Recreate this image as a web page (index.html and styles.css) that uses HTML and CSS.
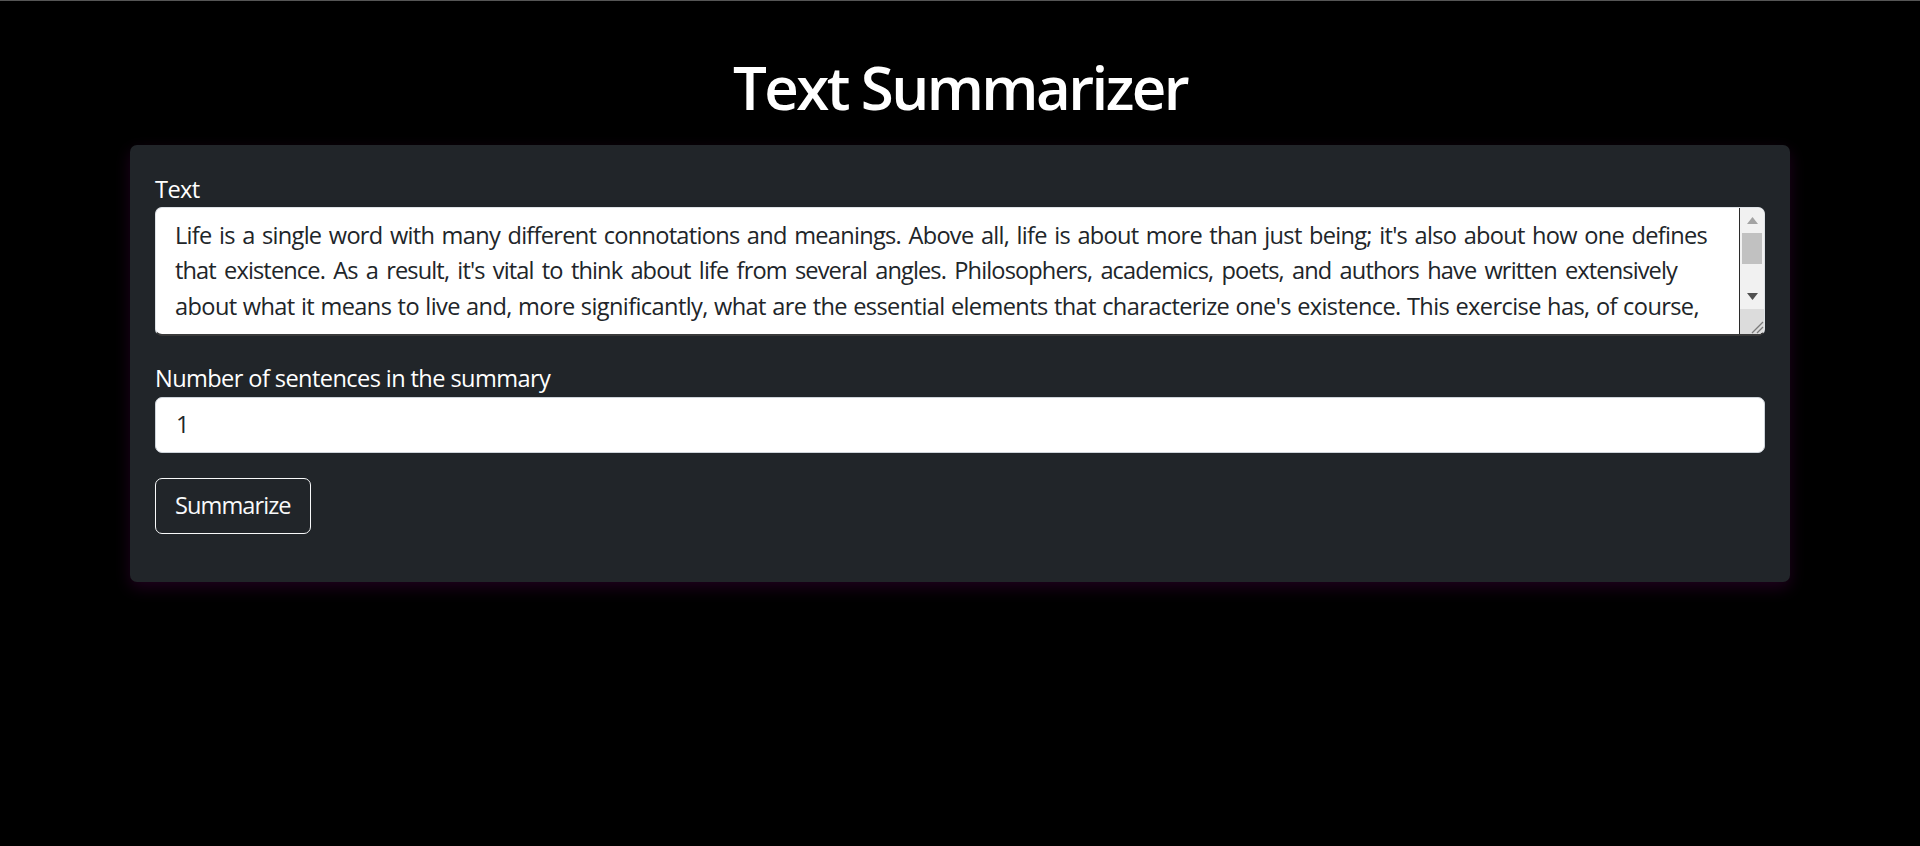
FILE: index.html
```html
<!DOCTYPE html>
<html lang="en">
<head>
<meta charset="utf-8">
<title>Text Summarizer</title>
<link rel="stylesheet" href="styles.css">
</head>
<body>
<main class="page">
  <h1 class="title">Text Summarizer</h1>
  <form class="card">
    <label class="form-label">Text</label>
    <div class="ta">
      <div class="ta-text">
        <span class="line l1">Life is a single word with many different connotations and meanings. Above all, life is about more than just being; it's also about how one defines</span>
        <span class="line l2">that existence. As a result, it's vital to think about life from several angles. Philosophers, academics, poets, and authors have written extensively</span>
        <span class="line l3">about what it means to live and, more significantly, what are the essential elements that characterize one's existence. This exercise has, of course,</span>
      </div>
      <div class="ta-bar">
        <div class="sb-btn">
          <svg width="11" height="7" viewBox="0 0 11 7"><path d="M0 7 L5.5 0 L11 7 Z" fill="#a3a3a3"/></svg>
        </div>
        <div class="sb-track">
          <div class="sb-thumb"></div>
        </div>
        <div class="sb-btn">
          <svg width="11" height="7" viewBox="0 0 11 7"><path d="M0 0 L11 0 L5.5 7 Z" fill="#505050"/></svg>
        </div>
        <div class="sb-corner">
          <svg width="14" height="14" viewBox="0 0 14 14"><path d="M13 2 L2 13 M13 7 L7 13" stroke="#7a7a7a" stroke-width="1.3" fill="none"/></svg>
        </div>
      </div>
    </div>
    <label class="form-label second">Number of sentences in the summary</label>
    <div class="input">1</div>
    <button type="button" class="btn">Summarize</button>
  </form>
</main>
</body>
</html>
```
FILE: styles.css
```css
html, body {
  margin: 0;
  background: #000;
}
body {
  border-top: 1px solid #555;
  font-family: "Open Sans", "Noto Sans", sans-serif;
  min-height: 845px;
}
.page {
  display: flex;
  flex-direction: column;
  align-items: center;
  padding-top: 50px;
}
.title {
  margin: 0;
  color: #fff;
  font-size: 60px;
  font-weight: 600;
  line-height: 72px;
  letter-spacing: -2.6px;
  text-align: center;
}
.card {
  margin-top: 22px;
  width: 1660px;
  box-sizing: border-box;
  background: #212529;
  border-radius: 7px;
  padding: 27px 25px 48px;
  box-shadow: 0 6px 16px rgba(140, 0, 130, 0.22);
  display: flex;
  flex-direction: column;
  align-items: flex-start;
}
.form-label {
  color: #fff;
  font-size: 23.6px;
  line-height: 35.4px;
  letter-spacing: -0.6px;
}
.form-label.second {
  margin-top: 25px;
}
.ta {
  align-self: stretch;
  display: flex;
  height: 129px;
  box-sizing: border-box;
  background: #fff;
  border: 1px solid #dee2e6;
  border-bottom: 2px solid #3a3a3a;
  border-radius: 7px;
  overflow: hidden;
}
.ta-text {
  flex: 1;
  min-width: 0;
  padding: 9.4px 19px;
  color: #212529;
  font-size: 23.6px;
  line-height: 35.4px;
  overflow: hidden;
}
.line {
  display: block;
  text-align: justify;
  text-align-last: justify;
}
.l1 { width: 1532px; letter-spacing: -0.72px; }
.l2 { width: 1502px; letter-spacing: -0.88px; }
.l3 { width: 1524px; letter-spacing: -0.62px; }
.ta-bar {
  width: 24px;
  flex: none;
  border-left: 1px solid #2b2b2b;
  background: #f1f1f1;
  display: flex;
  flex-direction: column;
}
.sb-btn {
  height: 25px;
  display: flex;
  align-items: center;
  justify-content: center;
}
.sb-track {
  flex: 1;
  padding: 0 2px;
}
.sb-thumb {
  height: 31px;
  background: #c1c1c1;
}
.sb-corner {
  height: 25px;
  background: #dcdcdc;
  display: flex;
  align-items: flex-end;
  justify-content: flex-end;
}
.sb-corner svg {
  display: block;
}
.input {
  align-self: stretch;
  box-sizing: border-box;
  height: 56.2px;
  background: #fff;
  border: 1px solid #ced4da;
  border-radius: 7px;
  padding: 9.4px 20px;
  color: #212529;
  font-size: 23.6px;
  line-height: 35.4px;
}
.btn {
  margin-top: 24.5px;
  background: transparent;
  color: #f8f9fa;
  border: 1px solid #f8f9fa;
  border-radius: 7px;
  padding: 9.4px 19px;
  font-family: inherit;
  font-size: 23.6px;
  line-height: 35.4px;
  letter-spacing: -0.95px;
  cursor: pointer;
}
```
